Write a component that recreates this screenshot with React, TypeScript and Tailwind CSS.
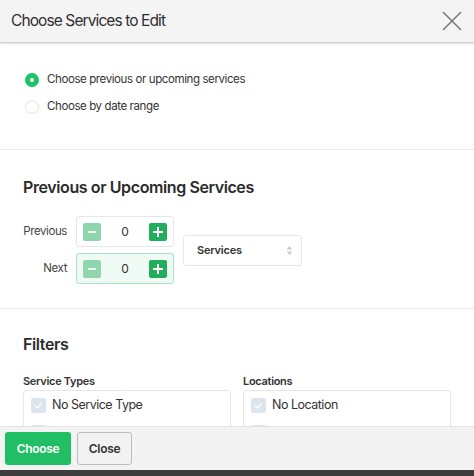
import React from "react";

const font = { fontFamily: "Inter, 'Noto Sans', sans-serif" };

function Stepper({ active }: { active?: boolean }) {
  return (
    <div
      className={`w-[98px] h-[31px] rounded-[3px] border flex items-center justify-between px-[6px] ${
        active ? "bg-[#eefaf3] border-[#a8e3c1]" : "bg-white border-[#e4e6e8]"
      }`}
    >
      <div className="w-[18px] h-[18px] rounded-[2px] bg-[#8fd6ac] flex items-center justify-center">
        <div className="w-[8px] h-[2px] bg-white/80" />
      </div>
      <span className="text-[12px] text-[#333]">0</span>
      <div className="w-[18px] h-[18px] rounded-[2px] bg-[#22ad5c] flex items-center justify-center relative">
        <div className="w-[10px] h-[2px] bg-white" />
        <div className="absolute w-[2px] h-[10px] bg-white" />
      </div>
    </div>
  );
}

function Check({ label }: { label: string }) {
  return (
    <div className="flex items-center gap-[6px] h-[14px]">
      <div className="w-[15px] h-[15px] rounded-[2px] bg-[#dce5ee] flex items-center justify-center">
        <svg width="11" height="11" viewBox="0 0 12 12">
          <path d="M2.5 6.2 L5 8.6 L9.6 3.4" stroke="#fff" strokeWidth="1.6" fill="none" />
        </svg>
      </div>
      <span className="text-[12.5px] tracking-[-0.5px] text-[#333]">{label}</span>
    </div>
  );
}

export default function App() {
  return (
    <div className="w-[474px] h-[476px] flex flex-col bg-white overflow-hidden" style={font}>
      <div className="h-[43px] shrink-0 bg-[#f4f4f4] border-b border-[#cfcfcf] shadow-[0_1px_2px_rgba(0,0,0,0.12)] flex items-center justify-between pl-[11px] pr-[12px] relative z-10">
        <span className="text-[15.5px] text-[#2f2f2f] tracking-[-0.9px]">Choose Services to Edit</span>
        <svg width="20" height="20" viewBox="0 0 20 20">
          <path d="M1 1 L19 19 M19 1 L1 19" stroke="#777" strokeWidth="1.5" />
        </svg>
      </div>

      <div className="flex-1 overflow-hidden">
        <div className="h-[107px] border-b border-[#e9ecee] pl-[25px] pt-[29px] flex flex-col gap-[12px]">
          <div className="flex items-center gap-[8px]">
            <div className="w-[14px] h-[14px] rounded-full bg-[#1fc266] flex items-center justify-center">
              <div className="w-[4px] h-[4px] rounded-full bg-white" />
            </div>
            <span className="text-[11.5px] leading-[15px] tracking-[-0.4px] text-[#333]">Choose previous or upcoming services</span>
          </div>
          <div className="flex items-center gap-[8px]">
            <div className="w-[14px] h-[14px] rounded-full border border-[#e2e2e2] bg-white" />
            <span className="text-[11.5px] leading-[15px] tracking-[-0.4px] text-[#333]">Choose by date range</span>
          </div>
        </div>

        <div className="h-[159px] border-b border-[#e9ecee] pl-[23px] pt-[27px]">
          <div className="text-[16px] font-semibold text-[#2b2b2b] leading-[20px] tracking-[-0.4px]">Previous or Upcoming Services</div>
          <div className="mt-[19px] flex items-center gap-[9px]">
            <div className="grid grid-cols-[44px_98px] gap-x-[9px] gap-y-[6px] items-center">
              <span className="text-[11.5px] tracking-[-0.4px] text-[#444] text-right">Previous</span>
              <Stepper />
              <span className="text-[11.5px] tracking-[-0.4px] text-[#444] text-right">Next</span>
              <Stepper active />
            </div>
            <div className="w-[119px] h-[31px] rounded-[3px] border border-[#e4e6e8] flex items-center justify-between pl-[13px] pr-[8px]">
              <span className="text-[11px] font-semibold tracking-[-0.2px] text-[#333]">Services</span>
              <svg width="7" height="11" viewBox="0 0 7 11">
                <path d="M0.5 4.5 L3.5 1 L6.5 4.5 Z M0.5 6.5 L3.5 10 L6.5 6.5 Z" fill="#ccc" />
              </svg>
            </div>
          </div>
        </div>

        <div className="px-[23px] pt-[25px]">
          <div className="text-[16px] font-semibold text-[#2b2b2b] leading-[20px] tracking-[-0.4px]">Filters</div>
          <div className="mt-[20px] grid grid-cols-2 gap-x-[12px]">
            <div>
              <div className="text-[11px] font-semibold tracking-[-0.3px] text-[#333] leading-[14px]">Service Types</div>
              <div className="mt-[2px] h-[60px] border border-[#e4e6e8] rounded-[3px] pl-[7px] pt-[7px] flex flex-col gap-[13px]">
                <Check label="No Service Type" />
                <Check label="" />
              </div>
            </div>
            <div>
              <div className="text-[11px] font-semibold tracking-[-0.3px] text-[#333] leading-[14px]">Locations</div>
              <div className="mt-[2px] h-[60px] border border-[#e4e6e8] rounded-[3px] pl-[7px] pt-[7px] flex flex-col gap-[13px]">
                <Check label="No Location" />
                <Check label="" />
              </div>
            </div>
          </div>
        </div>
      </div>

      <div className="h-[44px] shrink-0 bg-[#f3f3f3] border-t border-[#e2e2e2] flex items-center gap-[6px] px-[5px] relative z-10">
        <button className="w-[66px] h-[33px] rounded-[3px] bg-[#21bf65] text-white text-[12px] tracking-[-0.3px] font-semibold">Choose</button>
        <button className="w-[55px] h-[33px] rounded-[3px] bg-[#f2f2f2] border border-[#bdbdbd] text-[#333] text-[12px] tracking-[-0.3px] font-semibold">Close</button>
      </div>
      <div className="h-[6px] shrink-0 bg-[#3d3d3d]" />
    </div>
  );
}
